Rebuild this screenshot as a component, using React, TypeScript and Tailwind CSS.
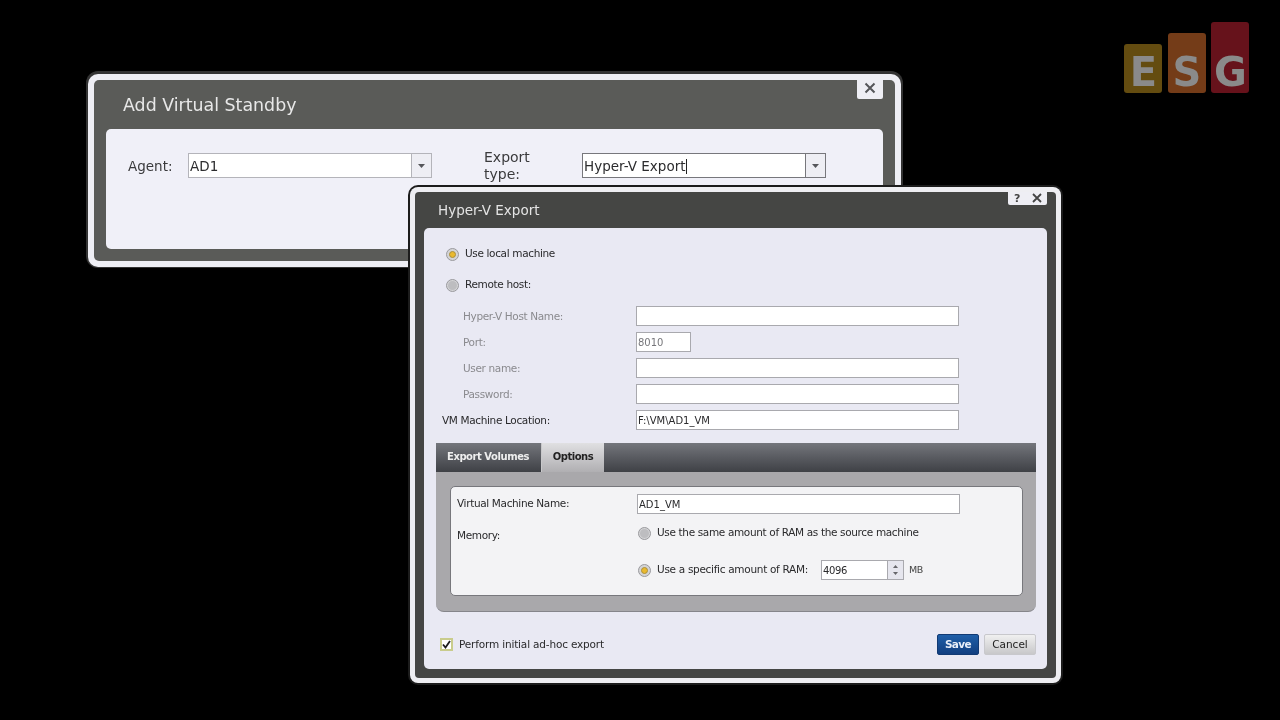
import React from "react";

const font = { fontFamily: '"DejaVu Sans", sans-serif' };

function Radio({ on }: { on?: boolean }) {
  return (
    <span className="w-[13px] h-[13px] rounded-full border border-[#9a9a9e] bg-[#d4d4d6] flex items-center justify-center shrink-0">
      {on ? (
        <span className="w-[7px] h-[7px] rounded-full bg-[#eab92e] border border-[#a98f3c]" />
      ) : (
        <span className="w-[9px] h-[9px] rounded-full bg-[#bdbdc0]" />
      )}
    </span>
  );
}

function Caret() {
  return (
    <svg width="7" height="4" viewBox="0 0 7 4">
      <path d="M0 0h7L3.5 4z" fill="#55565a" />
    </svg>
  );
}

function Combo({ value, dark, caret }: { value: string; dark?: boolean; caret?: boolean }) {
  return (
    <div className={`w-[244px] h-[25px] flex border ${dark ? "border-[#77777c]" : "border-[#b4b4ba]"} bg-white`}>
      <div className="flex-1 flex items-center pl-[1px] pt-[1px] text-[13.5px] text-[#2c2c2e]">
        {value}
        {caret && <span className="w-[1px] h-[15px] bg-[#222]" />}
      </div>
      <div className={`w-[20px] flex items-center justify-center bg-[#eeeef4] border-l ${dark ? "border-[#77777c]" : "border-[#b4b4ba]"}`}>
        <Caret />
      </div>
    </div>
  );
}

function Field({ value, w = "w-[323px]", gray }: { value?: string; w?: string; gray?: boolean }) {
  return (
    <div className={`${w} h-[20px] bg-white border border-[#a9a9ae] flex items-center pl-[1px] text-[10px] tracking-normal ${gray ? "text-[#76767a]" : "text-[#2a2a2c]"}`}>
      {value}
    </div>
  );
}

function FormRow({ label, gray, children }: { label: string; gray?: boolean; children: React.ReactNode }) {
  return (
    <div className="flex items-center h-[20px]">
      <div className={`${gray ? "w-[212px] pl-[39px] text-[#8a8a8e]" : "w-[212px] pl-[18px] text-[#2a2a2c]"} pt-[1px] text-[10.5px] tracking-[-0.35px]`}>{label}</div>
      {children}
    </div>
  );
}

function Bar({ h, color, letter }: { h: string; color: string; letter: string }) {
  return (
    <div className={`w-[38px] ${h} ${color} rounded-[3px] flex items-end justify-center pb-[1px]`}>
      <span className="text-[40px] leading-[40px] font-bold text-[#8a8a8a] tracking-[-1px]">{letter}</span>
    </div>
  );
}

export default function App() {
  return (
    <div className="relative w-[1280px] h-[720px] bg-black overflow-hidden blur-[0.4px]" style={font}>
      <div className="absolute left-[1124px] top-[22px] h-[71px] flex items-end gap-[5.5px]">
        <Bar h="h-[49px]" color="bg-[#644c10]" letter="E" />
        <Bar h="h-[60px]" color="bg-[#743c18]" letter="S" />
        <Bar h="h-[71px]" color="bg-[#66121b]" letter="G" />
      </div>

      {/* Add Virtual Standby */}
      <div className="absolute left-[88px] top-[74px] w-[813px] h-[193px] bg-[#eeeef4] rounded-[10px] p-[6px] shadow-[0_-1px_0_2px_#333333]">
        <div className="relative h-full bg-[#5a5b58] rounded-[5px] px-[12px] pb-[12px] flex flex-col">
          <div className="h-[49px] shrink-0 flex items-center pl-[17px] pt-[1px] text-[17.4px] text-[#e8e8e8]">Add Virtual Standby</div>
          <div className="flex-1 bg-[#f0f0f8] rounded-[5px] flex items-start pt-[24px] pl-[22px] text-[13.5px] text-[#3a3a3c]">
            <div className="w-[60px] h-[25px] flex items-center pt-[1px]">Agent:</div>
            <Combo value="AD1" />
            <div className="w-[98px] ml-[52px] leading-[17px] -mt-[4px] text-[14px] text-[#3a3a3c]">
              Export
              <br />
              type:
            </div>
            <Combo value="Hyper-V Export" dark caret />
          </div>
          <div className="absolute right-[12px] top-0 w-[26px] h-[19px] bg-[#eeeef4] rounded-b-[2px] flex items-center justify-center pb-[3px]">
            <svg width="12" height="12" viewBox="0 0 12 12">
              <path d="M1.5 1.5l9 9M10.5 1.5l-9 9" stroke="#555659" strokeWidth="2" />
            </svg>
          </div>
        </div>
      </div>

      {/* Hyper-V Export */}
      <div className="absolute left-[410px] top-[187px] w-[651px] h-[496px] bg-[#eeeef2] rounded-[8px] p-[5px] shadow-[0_0_0_2px_#1c1c1c]">
        <div className="relative h-full bg-[#454644] rounded-[4px] px-[9px] pb-[9px] flex flex-col">
          <div className="h-[36px] shrink-0 flex items-center pl-[14px] text-[13.5px] text-[#e4e4e4]">Hyper-V Export</div>
          <div className="flex-1 bg-[#e9e9f3] rounded-[5px] flex flex-col pt-[16px] text-[#2a2a2c] text-[10.5px] tracking-[-0.35px]">
            <div className="flex items-center h-[20px] pl-[22px] gap-[6px]">
              <Radio on />
              <span>Use local machine</span>
            </div>
            <div className="flex items-center h-[20px] pl-[22px] gap-[6px] mt-[11px]">
              <Radio />
              <span>Remote host:</span>
            </div>
            <div className="flex flex-col gap-[6px] mt-[11px]">
              <FormRow label="Hyper-V Host Name:" gray>
                <Field />
              </FormRow>
              <FormRow label="Port:" gray>
                <Field value="8010" w="w-[55px]" gray />
              </FormRow>
              <FormRow label="User name:" gray>
                <Field />
              </FormRow>
              <FormRow label="Password:" gray>
                <Field />
              </FormRow>
              <FormRow label="VM Machine Location:">
                <Field value="F:\VM\AD1_VM" />
              </FormRow>
            </div>

            <div className="mx-[12px] mt-[13px] w-[600px] rounded-b-[8px] bg-[#a9a8ab] border-b border-[#85858a] overflow-hidden">
              <div className="h-[29px] flex items-stretch bg-gradient-to-b from-[#74767c] to-[#3f4146]">
                <div className="w-[106px] flex items-center pl-[11px] pb-[2px] text-[#eeeeee] font-bold text-[10px] tracking-[-0.45px] border-r border-[#c8c8ca]">Export Volumes</div>
                <div className="w-[62px] flex items-center justify-center pb-[2px] bg-gradient-to-b from-[#e0e0e2] to-[#b0afb2] text-[#222] text-[10px] font-bold tracking-[-0.5px]">Options</div>
              </div>
              <div className="p-[14px] pr-[13px] pb-[15px]">
                <div className="relative h-[110px] bg-[#f3f3f5] rounded-[5px] border border-[#77777c] pt-[7px] pl-[6px] text-[10.5px]">
                  <div className="flex items-center h-[20px]">
                    <div className="w-[180px]">Virtual Machine Name:</div>
                    <Field value="AD1_VM" />
                  </div>
                  <div className="flex mt-[9px]">
                    <div className="w-[181px] pt-[5px]">Memory:</div>
                    <div className="flex flex-col gap-[17px]">
                      <div className="flex items-center h-[20px] gap-[6px]">
                        <Radio />
                        <span>Use the same amount of RAM as the source machine</span>
                      </div>
                      <div className="flex items-center h-[20px] gap-[6px]">
                        <Radio on />
                        <span className="tracking-[-0.3px]">Use a specific amount of RAM:</span>
                        <div className="ml-[7px] w-[83px] h-[20px] flex bg-white border border-[#a9a9ae]">
                          <div className="flex-1 flex items-center pl-[1px] text-[10px] text-[#2a2a2c]">4096</div>
                          <div className="w-[16px] bg-[#e6e6ee] border-l border-[#a9a9ae] flex flex-col items-center justify-center gap-[4px]">
                            <svg width="5" height="3" viewBox="0 0 5 3"><path d="M0 3h5L2.5 0z" fill="#66666a" /></svg>
                            <svg width="5" height="3" viewBox="0 0 5 3"><path d="M0 0h5L2.5 3z" fill="#66666a" /></svg>
                          </div>
                        </div>
                        <span className="-ml-[1px] text-[9.5px] text-[#444]">MB</span>
                      </div>
                    </div>
                  </div>
                </div>
              </div>
            </div>

            <div className="flex items-center pl-[16px] pr-[11px] mt-[22px]">
              <div className="w-[13px] h-[13px] bg-white border-2 border-[#c9cc8c] flex items-center justify-center">
                <svg width="9" height="9" viewBox="0 0 9 9">
                  <path d="M1 4.5l2.5 3L8 1" fill="none" stroke="#1c1c1e" strokeWidth="1.8" />
                </svg>
              </div>
              <span className="ml-[6px] tracking-[-0.17px]">Perform initial ad-hoc export</span>
              <div className="ml-auto flex gap-[5px]">
                <div className="w-[42px] h-[21px] rounded-[2px] border border-[#123a73] bg-gradient-to-b from-[#1f5fa8] to-[#123f80] text-[#e8eef8] font-bold text-[10.5px] tracking-[-0.6px] flex items-center justify-center">Save</div>
                <div className="w-[52px] h-[21px] rounded-[2px] border border-[#c8c8cc] bg-gradient-to-b from-[#f0f0f0] to-[#c8c8ca] text-[#222] text-[10.5px] tracking-normal flex items-center justify-center">Cancel</div>
              </div>
            </div>
          </div>
          <div className="absolute right-[9px] top-0 w-[39px] h-[13px] bg-[#eeeef4] rounded-b-[2px] flex items-center justify-between pl-[6px] pr-[5px] pb-[1px]">
            <span className="text-[11px] font-bold text-[#444] leading-none">?</span>
            <svg width="10" height="10" viewBox="0 0 10 10">
              <path d="M1 1l8 8M9 1l-8 8" stroke="#444" strokeWidth="1.8" />
            </svg>
          </div>
        </div>
      </div>
    </div>
  );
}
